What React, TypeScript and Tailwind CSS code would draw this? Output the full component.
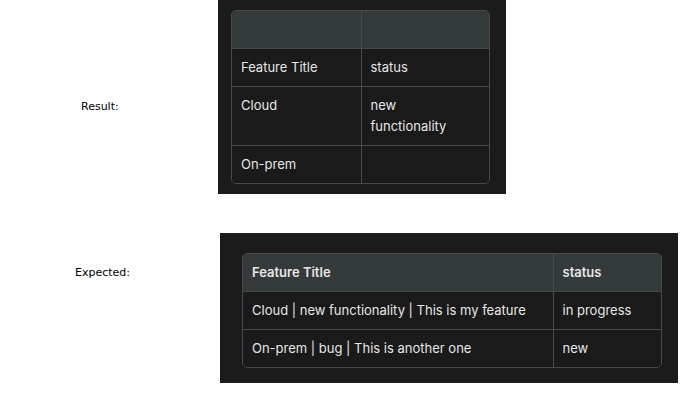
const resultRows = [
  { id: "res-head", cells: ["\u00a0", "\u00a0"], head: true },
  { id: "res-1", cells: ["Feature Title", "status"], head: false },
  { id: "res-2", cells: ["Cloud", "new functionality"], head: false },
  { id: "res-3", cells: ["On-prem", "\u00a0"], head: false }
] as const;

const expectedRows = [
  { id: "exp-head", cells: ["Feature Title", "status"], head: true },
  { id: "exp-1", cells: ["Cloud | new functionality | This is my feature", "in progress"], head: false },
  { id: "exp-2", cells: ["On-prem | bug | This is another one", "new"], head: false }
] as const;

type Row = { id: string; cells: readonly string[]; head: boolean };

function DarkTable({ rows, widths, nowrap }: { rows: readonly Row[]; widths: [string, string]; nowrap?: boolean }) {
  return (
    <div className="overflow-hidden rounded-[5px] border border-[#474a4a]">
      <table
        className={"w-full table-fixed border-collapse text-[13px] leading-[21px] text-[#e6e6e6] " + (nowrap ? "whitespace-nowrap" : "")}
        style={{ fontFamily: "Inter, 'Noto Sans', sans-serif" }}
      >
        <tbody>
          {rows.map((row, i) => (
            <tr
              key={row.id}
              className={
                (row.head ? "bg-[#343939] font-semibold " : "bg-[#1a1a1a] ") +
                (i < rows.length - 1 ? "border-b border-[#474a4a]" : "")
              }
            >
              <td className={"border-r border-[#474a4a] px-[9px] py-2 align-top " + widths[0]}>{row.cells[0]}</td>
              <td className={"py-2 pl-[9px] align-top " + widths[1]}>{row.cells[1]}</td>
            </tr>
          ))}
        </tbody>
      </table>
    </div>
  );
}

export default function App() {
  return (
    <div className="h-[393px] w-[690px] bg-white">
      <div className="flex">
        <div className="w-[218px] pl-[81px] pt-[99px] text-[11px] text-black" style={{ fontFamily: "'DejaVu Sans', Verdana, sans-serif" }}>
          Result:
        </div>
        <div className="w-[288px] bg-[#1b1b1b] pb-[10px] pl-[13px] pr-[16px] pt-[10px]">
          <DarkTable rows={resultRows} widths={["w-[129px]", "w-[128px] pr-[24px]"]} />
        </div>
      </div>

      <div className="mt-[39px] flex">
        <div className="w-[220px] pl-[75px] pt-[32px] text-[11px] text-black" style={{ fontFamily: "'DejaVu Sans', Verdana, sans-serif" }}>
          Expected:
        </div>
        <div className="w-[458px] bg-[#1b1b1b] pb-[15px] pl-[22px] pr-[16px] pt-[20px]">
          <DarkTable rows={expectedRows} widths={["w-[310px]", "w-[108px] pr-[9px]"]} nowrap />
        </div>
      </div>
    </div>
  );
}
